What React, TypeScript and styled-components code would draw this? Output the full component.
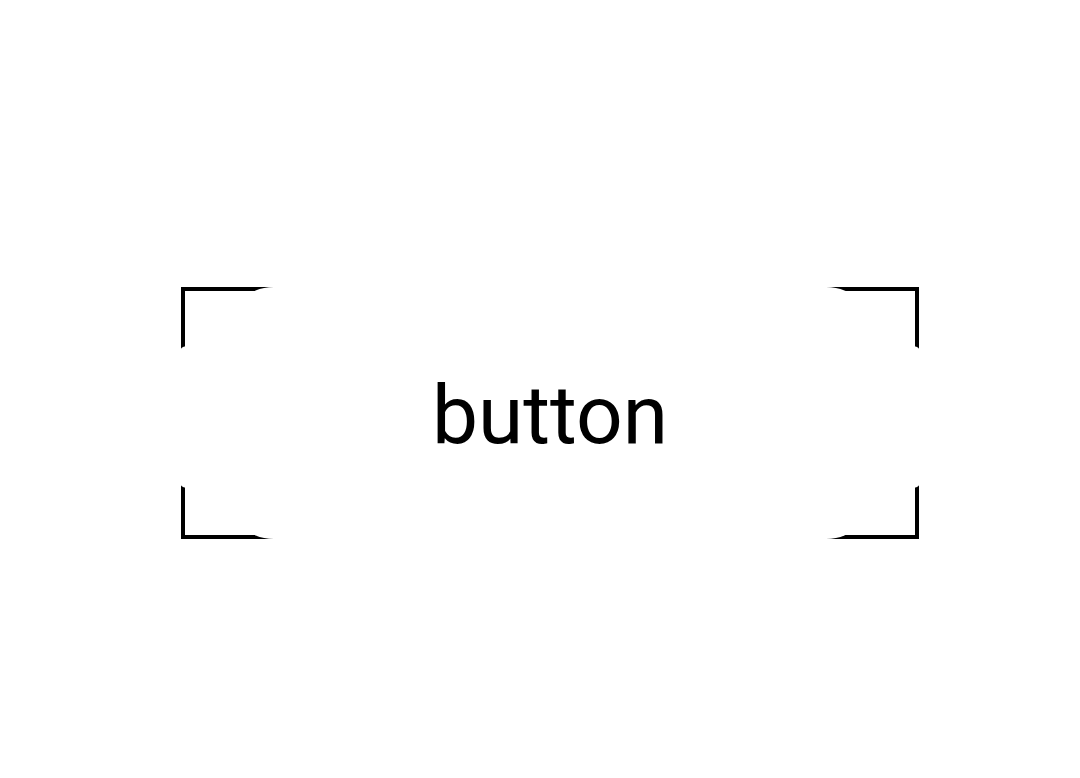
import styled, { createGlobalStyle } from "styled-components";

const GlobalStyle = createGlobalStyle`
    html, body {
        margin: 0;
        padding: 0;
        background: #ffffff;
    }
    * {
        box-sizing: border-box;
    }
`;

const Page = styled.main`
    min-height: 100vh;
    display: flex;
    justify-content: center;
    align-items: center;
    padding: 48px 0 0 20px;
`;

// Frame button: the border shows only at the four corners,
// two white covers hide the middle of each edge.
const CornerButton = styled.button`
    position: relative;
    width: 738px;
    height: 252px;
    border: 4px solid #000000;
    background: #ffffff;
    cursor: pointer;
    padding: 0;
    display: flex;
    justify-content: center;
    align-items: center;
    font-family: Roboto, "Noto Sans", sans-serif;
    font-size: 82px;
    color: #000000;

    &::before {
        content: "";
        position: absolute;
        top: -4px;
        bottom: -4px;
        left: 63px;
        right: 63px;
        background: #ffffff;
        border-radius: 26px / 12px;
    }

    &::after {
        content: "";
        position: absolute;
        left: -4px;
        right: -4px;
        top: 54px;
        bottom: 46px;
        background: #ffffff;
        border-radius: 16px / 4px;
    }
`;

const Label = styled.span`
    position: relative;
    z-index: 1;
    line-height: 1;
    margin-top: 3px;
`;

function App() {
    return (
        <>
            <GlobalStyle />
            <Page>
                <CornerButton>
                    <Label>button</Label>
                </CornerButton>
            </Page>
        </>
    );
}

export default App;
